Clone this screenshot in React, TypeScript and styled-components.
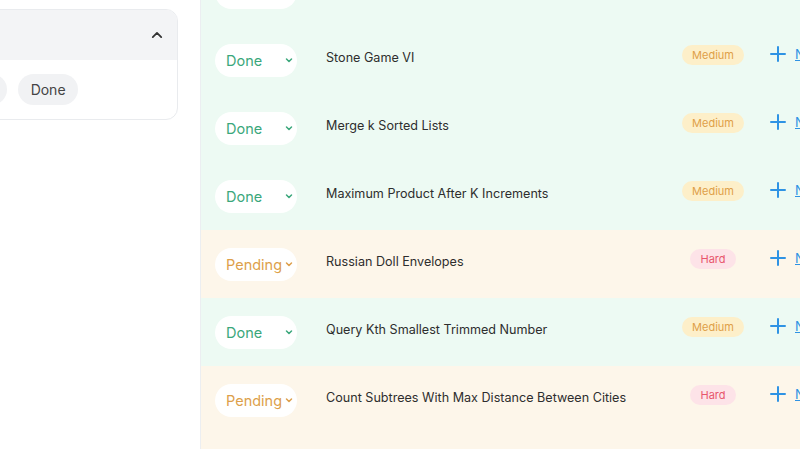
import React from "react";
import styled, { createGlobalStyle } from "styled-components";

const Global = createGlobalStyle`
  html, body { margin: 0; padding: 0; background: #ffffff; overflow: hidden; }
  body { font-family: Inter, "Noto Sans", "Liberation Sans", sans-serif; }
  * { box-sizing: border-box; }
`;

const Page = styled.div`
  display: flex;
  width: 800px;
  height: 449px;
  overflow: hidden;
`;

const Sidebar = styled.aside`
  width: 201px;
  flex: none;
  padding: 9px 22px 0 0;
  border-right: 1px solid #eceef1;
`;

const Card = styled.div`
  margin-left: -91px;
  border: 1px solid #e9ebee;
  border-radius: 12px;
  overflow: hidden;
  background: #fff;
`;

const CardHeader = styled.div`
  height: 50px;
  background: #f3f4f6;
  display: flex;
  align-items: center;
  justify-content: space-between;
  padding: 0 14px 0 16px;
  font-size: 14px;
  color: #333;
`;

const CardBody = styled.div`
  display: flex;
  gap: 11px;
  padding: 14px 16px 14px 18px;
`;

const FilterPill = styled.button`
  height: 31px;
  padding: 0 12.5px;
  border: none;
  border-radius: 999px;
  background: #f1f2f4;
  color: #444;
  font-family: inherit;
  font-size: 14px;
`;

const Main = styled.main`
  flex: none;
  width: 599px;
  margin-top: -42px;
  display: flex;
  flex-direction: column;
`;

const Row = styled.div<{ $pending: boolean }>`
  height: 68px;
  flex: none;
  display: flex;
  align-items: flex-start;
  padding: 18px 0 0 14px;
  background: ${(p) => (p.$pending ? "#fdf6ea" : "#edfaf3")};
`;

const StatusSelect = styled.div<{ $pending: boolean }>`
  width: 82px;
  height: 33px;
  flex: none;
  border-radius: 999px;
  background: #ffffff;
  display: flex;
  align-items: center;
  padding: 0 0 0 11px;
  position: relative;
  font-size: 14.5px;
  color: ${(p) => (p.$pending ? "#dd9f4b" : "#3ba77b")};
  svg {
    position: absolute;
    right: 4px;
    top: 12px;
  }
`;

const Title = styled.div`
  width: 347px;
  flex: none;
  margin: 6px 0 0 29px;
  font-size: 12.6px;
  line-height: 16px;
  color: #2e2e2e;
  white-space: nowrap;
`;

const BadgeCell = styled.div`
  width: 80px;
  flex: none;
  display: flex;
  justify-content: center;
  margin-top: 1px;
`;

const Badge = styled.span<{ $hard: boolean }>`
  height: 20px;
  line-height: 20px;
  padding: 0 10px;
  border-radius: 999px;
  font-size: 11px;
  background: ${(p) => (p.$hard ? "#fde3e8" : "#fdefc9")};
  color: ${(p) => (p.$hard ? "#e8566c" : "#df9f48")};
`;

const Actions = styled.div`
  flex: none;
  display: flex;
  align-items: center;
  gap: 9px;
  margin: 2px 0 0 17px;
  color: #2f93e4;
  svg { flex: none; }
`;

const NoteLink = styled.a`
  font-size: 13px;
  color: #2f93e4;
  text-decoration: underline;
  white-space: nowrap;
`;

const Chevron = ({ up = false, color, size = 8 }: { up?: boolean; color: string; size?: number }) => (
  <svg width={size} height={size} viewBox="0 0 8 8" fill="none">
    <path
      d={up ? "M1.2 5.4 L4 2.6 L6.8 5.4" : "M1.5 3 L4 5.5 L6.5 3"}
      stroke={color}
      strokeWidth={up ? 1.2 : 1.5}
      strokeLinecap="round"
      strokeLinejoin="round"
    />
  </svg>
);

const Plus = () => (
  <svg width="16" height="16" viewBox="0 0 16 16" fill="none">
    <path d="M8 1 V15 M1 8 H15" stroke="#2f93e4" strokeWidth="2" strokeLinecap="round" />
  </svg>
);

type Item = { title: string; pending: boolean; hard: boolean };

const items: Item[] = [
  { title: "Two Sum", pending: false, hard: false },
  { title: "Stone Game VI", pending: false, hard: false },
  { title: "Merge k Sorted Lists", pending: false, hard: false },
  { title: "Maximum Product After K Increments", pending: false, hard: false },
  { title: "Russian Doll Envelopes", pending: true, hard: true },
  { title: "Query Kth Smallest Trimmed Number", pending: false, hard: false },
  { title: "Count Subtrees With Max Distance Between Cities", pending: true, hard: true },
  { title: "Median of Two Sorted Arrays", pending: true, hard: true },
];

export default function App() {
  return (
    <>
      <Global />
      <Page>
        <Sidebar>
          <Card>
            <CardHeader>
              <span>Status</span>
              <Chevron up color="#333" size={12} />
            </CardHeader>
            <CardBody>
              <FilterPill>Pending</FilterPill>
              <FilterPill>Done</FilterPill>
            </CardBody>
          </Card>
        </Sidebar>
        <Main>
          {items.map((it) => (
            <Row key={it.title} $pending={it.pending}>
              <StatusSelect $pending={it.pending}>
                {it.pending ? "Pending" : "Done"}
                <Chevron color={it.pending ? "#dd9f4b" : "#3ba77b"} />
              </StatusSelect>
              <Title>{it.title}</Title>
              <BadgeCell>
                <Badge $hard={it.hard}>{it.hard ? "Hard" : "Medium"}</Badge>
              </BadgeCell>
              <Actions>
                <Plus />
                <NoteLink href="#">Note</NoteLink>
              </Actions>
            </Row>
          ))}
        </Main>
      </Page>
    </>
  );
}
